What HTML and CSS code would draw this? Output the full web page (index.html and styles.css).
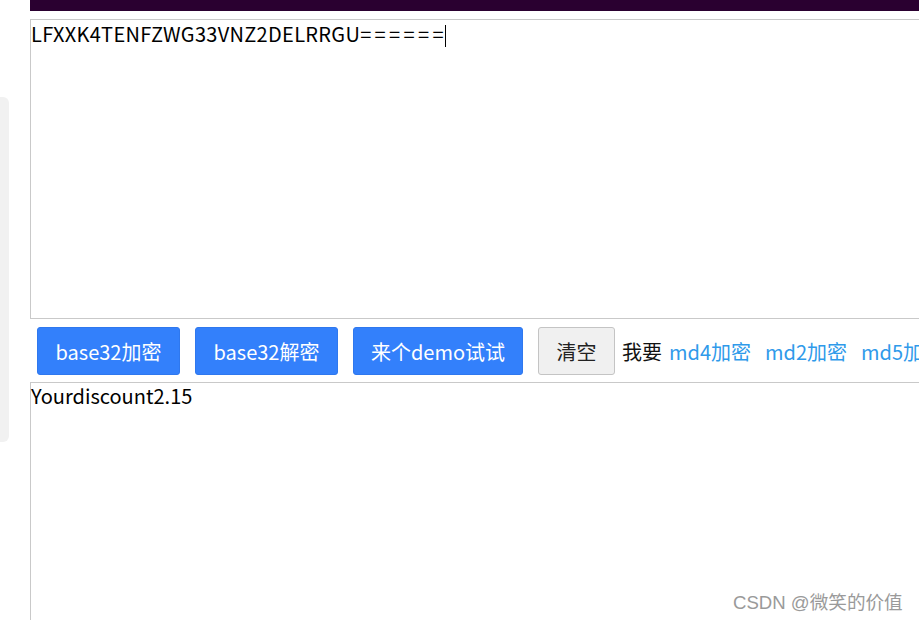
FILE: index.html
```html
<!DOCTYPE html>
<html lang="zh">
<head>
<meta charset="utf-8">
<title>base32</title>
<link rel="stylesheet" href="styles.css">
</head>
<body>
<div class="page">
  <aside class="side"></aside>
  <main class="main">
    <div class="topbar"></div>
    <div class="box box-in">LFXXK4TENFZWG33VNZ2DELRRGU<span class="eq">======</span><span class="caret"></span></div>
    <div class="actions">
      <button class="btn btn-blue b1">base32加密</button>
      <button class="btn btn-blue b2">base32解密</button>
      <button class="btn btn-blue b3">来个demo试试</button>
      <button class="btn btn-gray">清空</button>
      <span class="want">我要</span>
      <a class="lnk" href="#">md4加密</a>
      <a class="lnk" href="#">md2加密</a>
      <a class="lnk" href="#">md5加密</a>
    </div>
    <div class="box box-out">Yourdiscount2.15</div>
  </main>
</div>
<div class="mark">CSDN @微笑的价值</div>
</body>
</html>
```

FILE: styles.css
```css
html, body {
  margin: 0;
  padding: 0;
  background: #ffffff;
  overflow: hidden;
  width: 919px;
  height: 620px;
}
body {
  font-family: "Noto Sans CJK SC", "Noto Sans", sans-serif;
  font-size: 20px;
  color: #000;
}
.page {
  display: flex;
  align-items: flex-start;
  width: 919px;
  height: 620px;
  overflow: hidden;
}
.side {
  flex: 0 0 9px;
  height: 345px;
  margin-top: 97px;
  margin-right: 21px;
  background: #f1f1f1;
  border-radius: 0 6px 6px 0;
}
.main {
  flex: 0 0 1000px;
  display: flex;
  flex-direction: column;
}
.topbar {
  height: 11px;
  background: #2a0030;
  margin-bottom: 8px;
}
.box {
  box-sizing: border-box;
  border: 1px solid #c9c9c9;
  border-right: none;
  width: 1000px;
  padding: 1px 0 0 0;
  line-height: 26px;
  white-space: nowrap;
}
.box-in {
  height: 300px;
  letter-spacing: 0.3px;
}
.eq {
  letter-spacing: 3.4px;
}
.caret {
  display: inline-block;
  width: 1px;
  height: 22px;
  background: #000;
  vertical-align: -5px;
  margin-left: -2px;
}
.box-out {
  height: 240px;
  padding-top: 0;
}
.actions {
  display: flex;
  align-items: center;
  padding: 8px 0 7px 7px;
}
.btn {
  font-family: inherit;
  font-size: 20px;
  height: 48px;
  box-sizing: border-box;
  border-radius: 3px;
  padding: 0;
  margin-right: 15px;
  cursor: pointer;
}
.btn-blue {
  background: #3380fb;
  border: 1px solid #2f78ee;
  color: #fff;
}
.b1, .b2 { width: 143px; }
.b3 { width: 170px; }
.btn-gray {
  width: 77px;
  background: #f0f0f0;
  border: 1px solid #c4c4c4;
  color: #222;
  margin-right: 7px;
}
.want {
  margin-right: 7px;
  color: #111;
}
.lnk {
  color: #2f9aea;
  text-decoration: none;
  margin-right: 14px;
  white-space: nowrap;
}
.mark {
  position: absolute;
  left: 733px;
  top: 587px;
  font-family: "Liberation Sans", "Noto Sans CJK SC", sans-serif;
  font-size: 18.6px;
  color: #9a9a9a;
  white-space: nowrap;
}
```
